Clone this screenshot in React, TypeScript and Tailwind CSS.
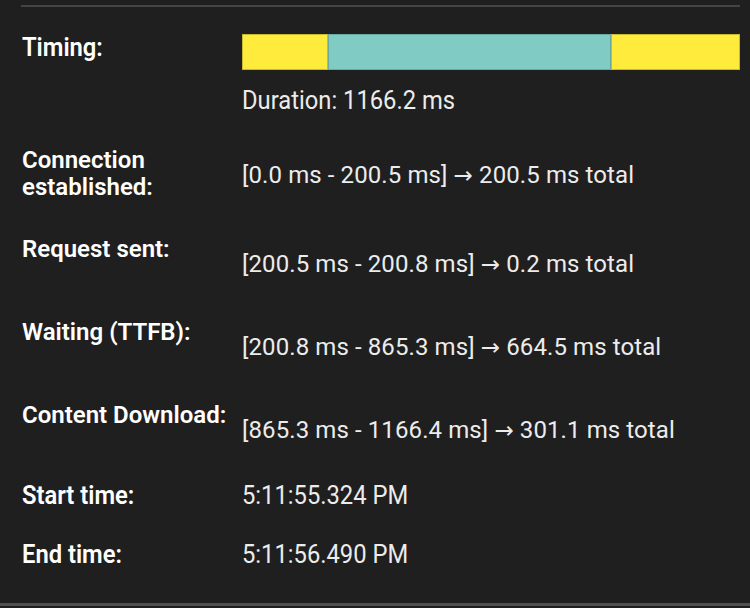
const segments = [
  { ms: 200.5, color: 'bg-[#ffeb3b] border-[#c9b92c]' },
  { ms: 0.3, color: 'bg-[#80cbc4] border-[#6aa9a3]' },
  { ms: 664.5, color: 'bg-[#80cbc4] border-[#6aa9a3]' },
  { ms: 301.1, color: 'bg-[#ffeb3b] border-[#c9b92c]' },
]

const total = segments.reduce((s, x) => s + x.ms, 0)

const ranges = [
  { label: 'Connection established:', from: '0.0', to: '200.5', took: '200.5', gap: 'mt-[32px]' },
  { label: 'Request sent:', from: '200.5', to: '200.8', took: '0.2', gap: 'mt-[35px]' },
  { label: 'Waiting (TTFB):', from: '200.8', to: '865.3', took: '664.5', gap: 'mt-[41px]' },
  { label: 'Content Download:', from: '865.3', to: '1166.4', took: '301.1', gap: 'mt-[41px]' },
]

function Narrow({ children }: { children: React.ReactNode }) {
  return <span className="inline-block origin-left scale-x-[0.95] text-[25px]">{children}</span>
}

export default function App() {
  return (
    <div
      className="h-[608px] w-[750px] overflow-hidden bg-[#1f1f1f] text-[24px] leading-[27px] text-[#ececec]"
      style={{ fontFamily: 'Roboto, "Noto Sans", sans-serif' }}
    >
      <div className="ml-[21px] mr-[10px] mt-[5px] h-[2px] bg-[#444]" />

      <div className="h-[596px] pl-[22px] pr-[10px] pt-[27px]">
        {/* Timing */}
        <div className="flex">
          <div className="w-[220px] font-semibold text-white">
            <Narrow>Timing:</Narrow>
          </div>
          <div className="flex-1">
            <div className="flex h-[36px] w-[498px]">
              {segments.map((s, i) =>
                s.ms < 1 ? null : (
                  <div
                    key={i}
                    className={`h-full border ${s.color}`}
                    style={{ width: `${(s.ms / total) * 100}%` }}
                  />
                )
              )}
            </div>
            <div className="mt-[17px]">
              <Narrow>Duration: 1166.2 ms</Narrow>
            </div>
          </div>
        </div>

        {ranges.map((r) => (
          <div key={r.label} className={`flex ${r.gap}`}>
            <div className="w-[220px] pr-2 font-semibold text-white">{r.label}</div>
            <div className="flex-1 whitespace-nowrap pt-[15px] tracking-[0.1px]">
              [{r.from} ms - {r.to} ms]{' '}
              <span style={{ fontFamily: '"DejaVu Sans", sans-serif' }} className="text-[23px]">
                {'\u2192'}
              </span>{' '}
              {r.took} ms total
            </div>
          </div>
        ))}

        <div className="mt-[38px] flex">
          <div className="w-[220px] font-semibold text-white">
            <Narrow>Start time:</Narrow>
          </div>
          <div>
            <Narrow>5:11:55.324 PM</Narrow>
          </div>
        </div>
        <div className="mt-[31px] flex">
          <div className="w-[220px] font-semibold text-white">
            <Narrow>End time:</Narrow>
          </div>
          <div>
            <Narrow>5:11:56.490 PM</Narrow>
          </div>
        </div>
      </div>

      <div className="h-[3px] bg-[#505050]" />
    </div>
  )
}
